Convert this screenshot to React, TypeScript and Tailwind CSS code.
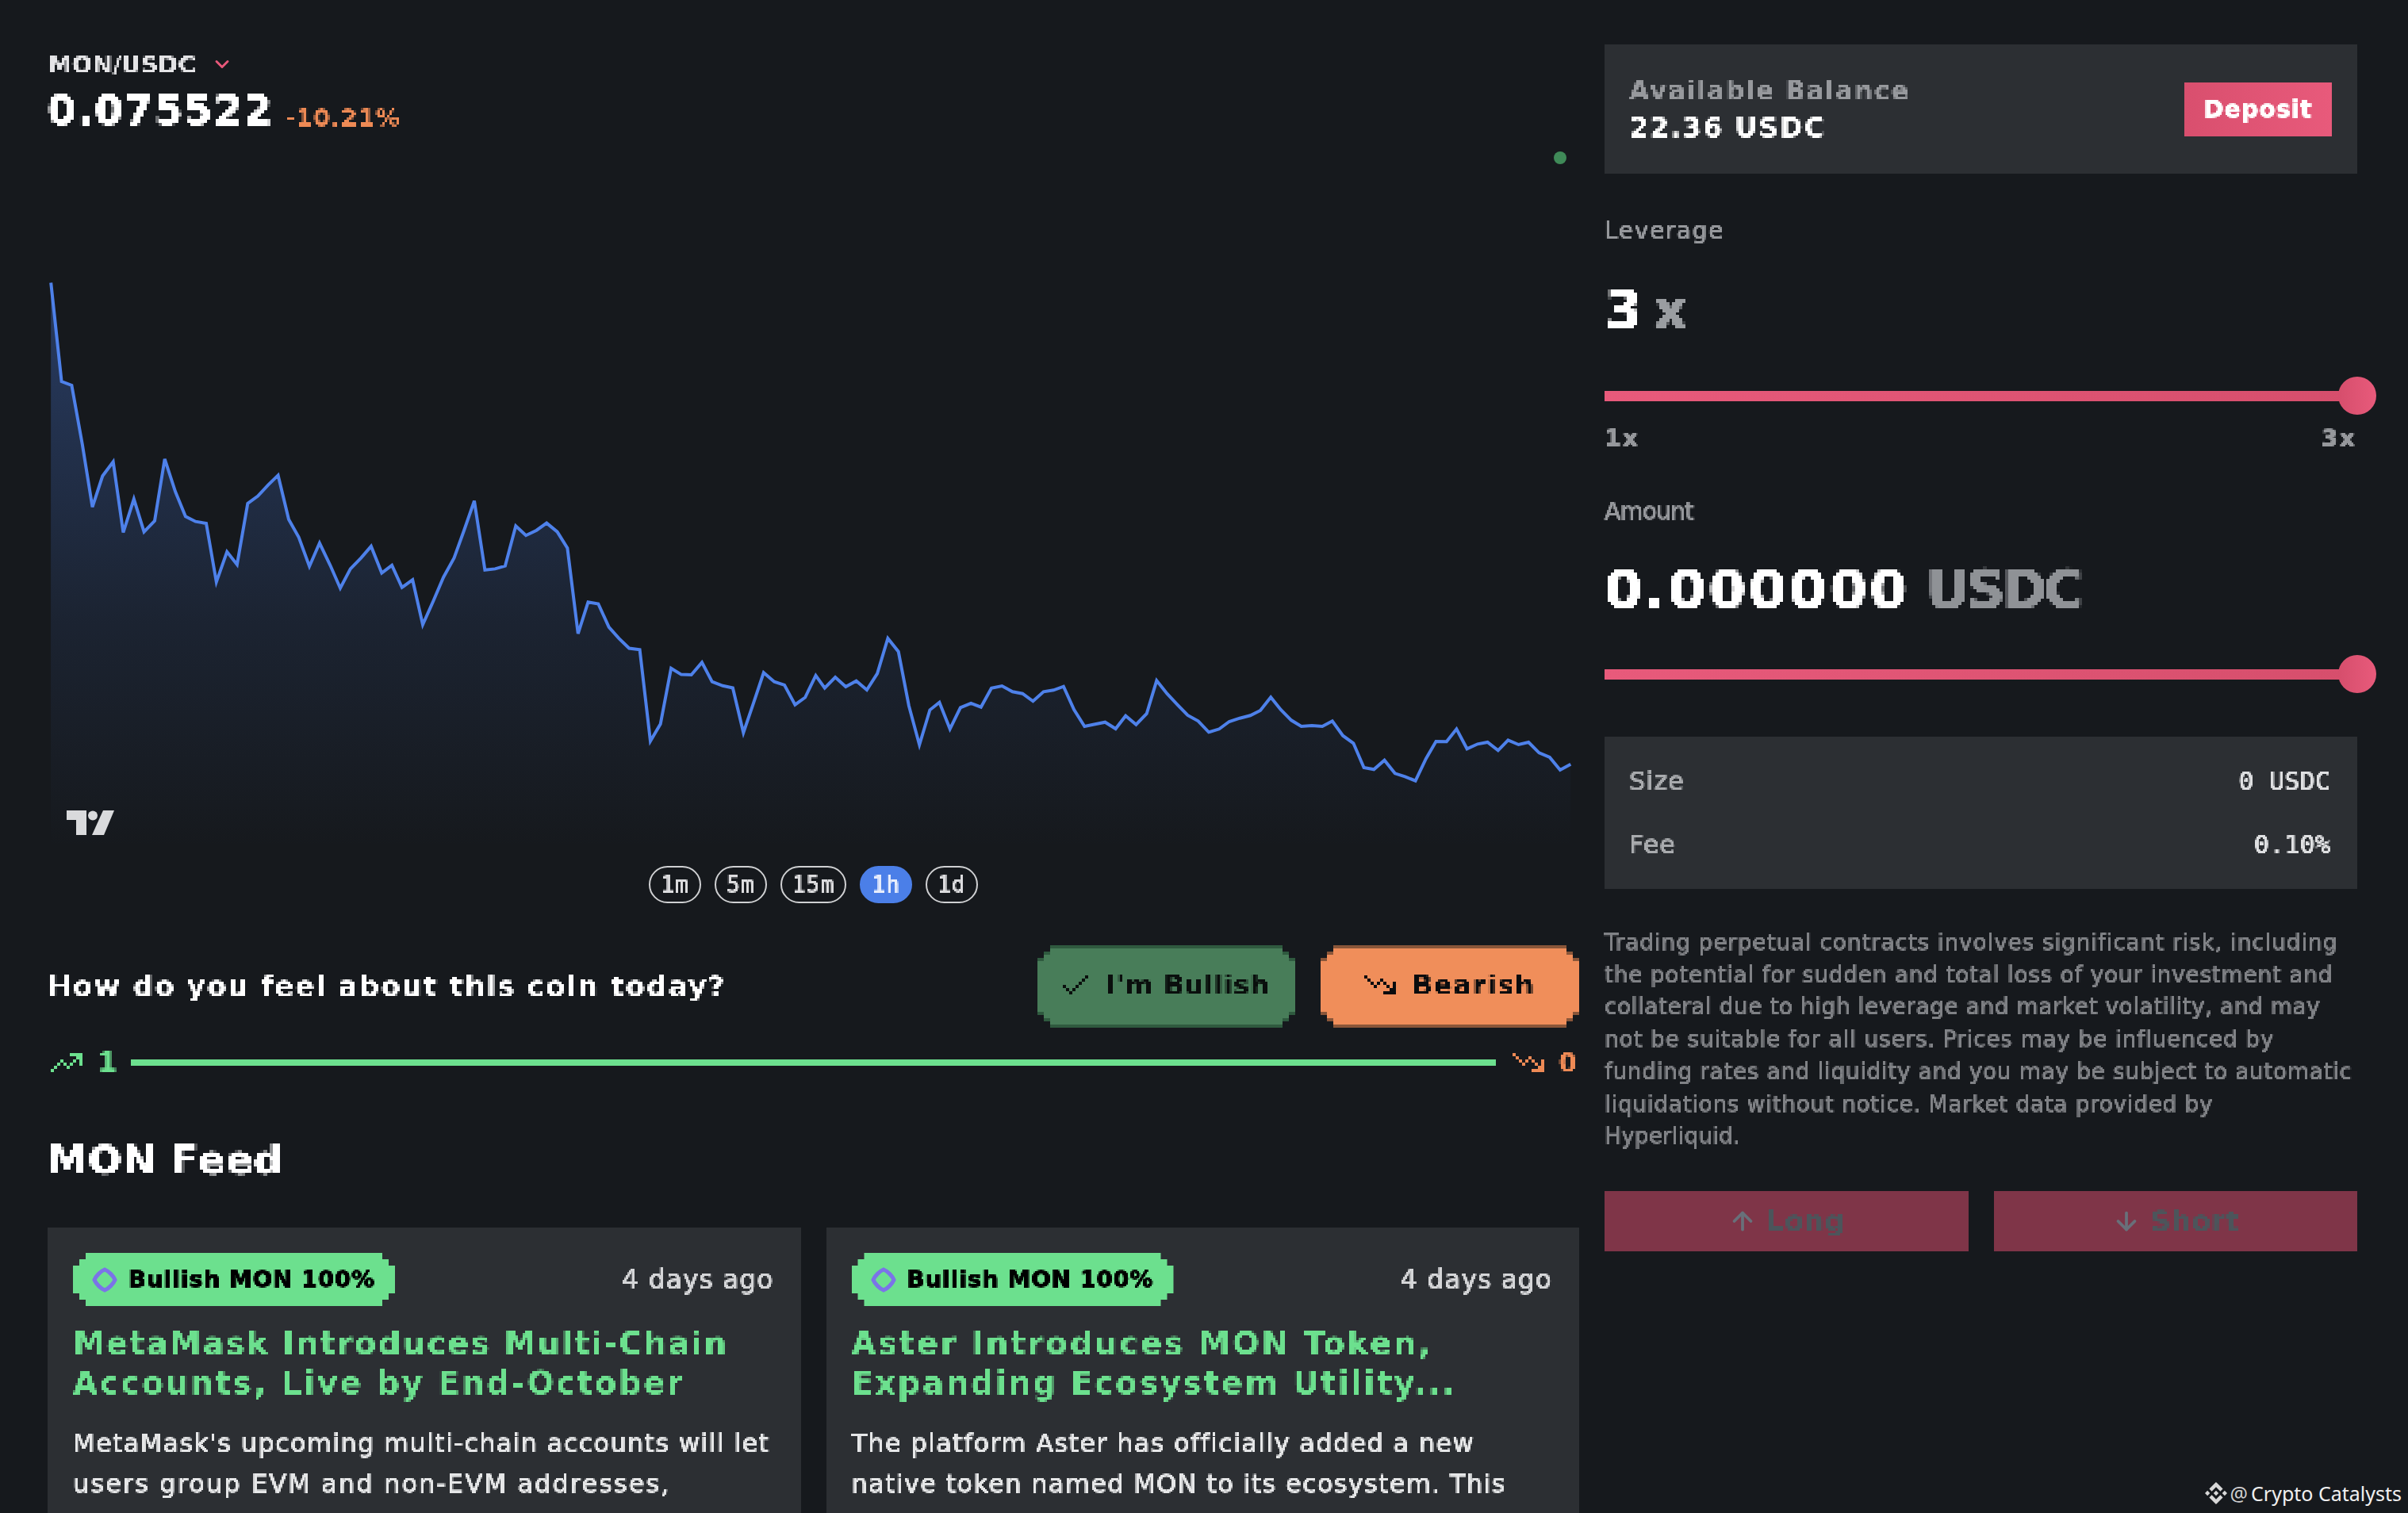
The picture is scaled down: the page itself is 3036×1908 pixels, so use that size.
import { ArrowDown, ArrowUp, ChevronDown } from "lucide-react";
import { SiBinance } from "react-icons/si";

const mono = "font-['DejaVu_Sans_Mono',monospace]";
const sans = "font-['DejaVu_Sans',sans-serif]";
const px2 = "[filter:url(#px2)]";
const px3 = "[filter:url(#px3)]";
const px4 = "[filter:url(#px4)]";
const stepped =
  "[clip-path:polygon(16px_0,calc(100%_-_16px)_0,calc(100%_-_16px)_8px,calc(100%_-_8px)_8px,calc(100%_-_8px)_16px,100%_16px,100%_calc(100%_-_16px),calc(100%_-_8px)_calc(100%_-_16px),calc(100%_-_8px)_calc(100%_-_8px),calc(100%_-_16px)_calc(100%_-_8px),calc(100%_-_16px)_100%,16px_100%,16px_calc(100%_-_8px),8px_calc(100%_-_8px),8px_calc(100%_-_16px),0_calc(100%_-_16px),0_16px,8px_16px,8px_8px,16px_8px)]";

// chart points read off the reference
const left = [38,36,59,307,79,318,100,480,120,652,140,567,161,528,181,722,202,630,222,720,243,690,263,520,284,610,304,678,324,692,345,697,365,858,386,775,406,810,427,642,447,622,467,592,487,565,508,686,528,735,549,815,569,751,590,812,610,875,630,822,651,792,671,760,692,833,712,812,732,873,753,852,773,975,794,910,814,845,835,792,855,715,875,635,896,825,916,822,936,814,957,704,977,730,998,716,1018,696,1039,720,1059,765,1080,1000,1100,913,1120,918,1141,982,1161,1013,1181,1040,1202,1044,1223,1295,1243,1248,1264,1095,1284,1112,1304,1113,1325,1079,1345,1132,1366,1143,1386,1149,1407,1272,1427,1190,1447,1107,1468,1132,1488,1141,1509,1195,1529,1175,1550,1115];
const right = [140,503,160,462,180,498,200,476,220,510,240,448,260,315,280,365,300,570,320,718,340,586,358,557,378,658,398,577,418,561,437,575,457,503,477,495,497,517,516,524,536,553,556,517,575,511,594,497,614,585,634,648,654,640,673,632,693,657,712,608,732,641,752,600,771,475,791,525,810,565,830,606,850,628,870,670,890,658,909,630,929,617,949,607,968,588,988,538,1007,585,1027,625,1046,648,1066,645,1086,648,1105,628,1125,683,1145,712,1165,804,1184,811,1204,776,1224,826,1243,838,1263,854,1283,770,1302,705,1322,706,1341,658,1361,733,1381,715,1400,708,1420,739,1439,700,1459,717,1478,708,1498,748,1518,765,1538,813,1558,791];

const points: number[][] = [];
for (let i = 0; i < left.length; i += 2) points.push([40 + left[i] / 1.568, 340 + left[i + 1] / 2.178]);
for (let i = 0; i < right.length; i += 2) points.push([1000 + (right[i] - 80) / 1.5077, 700 + right[i + 1] / 3]);

const line = points.map(([x, y]) => `${(x - 60).toFixed(1)},${(y - 340).toFixed(1)}`).join(" ");
const area = `4,730 ${line} 1920,730`;

const disclaimer = [
  ["Trading perpetual contracts involves significant risk, including", "tracking-[0.87px]"],
  ["the potential for sudden and total loss of your investment and", "tracking-[0.74px]"],
  ["collateral due to high leverage and market volatility, and may", "tracking-[0.53px]"],
  ["not be suitable for all users. Prices may be influenced by", "tracking-[0.83px]"],
  ["funding rates and liquidity and you may be subject to automatic", "tracking-[0.63px]"],
  ["liquidations without notice. Market data provided by", "tracking-[0.67px]"],
  ["Hyperliquid.", "tracking-[0.1px]"],
];

// pixel icons, [col, row] on a 4px grid
const checkCells = [[0,3],[1,4],[2,5],[3,4],[4,3],[5,2],[6,1],[7,0]];
const downCells = [[0,0],[1,1],[2,2],[3,3],[4,2],[5,1],[6,2],[7,3],[8,4],[9,2],[9,3],[9,4],[9,5],[8,5],[7,5],[6,5]];
const upCells = [[0,5],[1,4],[2,3],[3,2],[4,3],[5,4],[6,3],[7,2],[8,1],[9,0],[8,0],[7,0],[6,0],[9,1],[9,2],[9,3]];

const PixelIcon = ({ cells, w, className }: { cells: number[][]; w: number; className?: string }) => (
  <svg width={w * 4} height={24} viewBox={`0 0 ${w} 6`} className={className} fill="currentColor" shapeRendering="crispEdges">
    {cells.map(([x, y]) => <rect key={`${x}-${y}`} x={x} y={y} width="1" height="1" />)}
  </svg>
);

const FeedCard = ({ title, body }: { title: string[][]; body: string[][] }) => (
  <div className="bg-[#2c2f33] h-[400px] px-8 pt-8">
    <div className="flex items-center justify-between">
      <div className={`flex items-center gap-[14px] h-[67px] w-[406px] pl-6 bg-[#6ce08e] text-black ${stepped}`}>
        <svg viewBox="0 0 32 32" className="w-8 h-8" fill="none" stroke="#7b73e8" strokeWidth="5">
          <path d="M16 3 C21 5 27 11 29 16 C27 21 21 27 16 29 C11 27 5 21 3 16 C5 11 11 5 16 3Z" />
        </svg>
        <span className={`text-[29px] font-bold whitespace-nowrap tracking-[0.8px] ${sans} ${px2}`}>Bullish MON 100%</span>
      </div>
      <span className={`text-[33px] text-[#d5d6d8] pr-[2px] whitespace-nowrap tracking-[1px] ${sans} ${px2}`}>4 days ago</span>
    </div>
    <h3 className={`mt-[22px] text-[#6ce08e] text-[40px] leading-[50px] font-bold ${sans} ${px3}`}>
      {title.map(([t, c]) => <div key={t} className={`whitespace-nowrap ${c}`}>{t}</div>)}
    </h3>
    <p className={`mt-[26px] text-[#e6e7e8] text-[32px] leading-[51px] ${sans} ${px2}`}>
      {body.map(([t, c]) => <span key={t} className={`block whitespace-nowrap ${c}`}>{t}</span>)}
    </p>
  </div>
);

const Pill = ({ label, active }: { label: string; active?: boolean }) => (
  <button className={`h-[47px] rounded-[24px] px-[13px] border-2 text-[28px] leading-none tracking-[1px] ${active ? "bg-[#4b7fe8] border-[#4b7fe8] text-[#e8eefc]" : "border-[#cfd0d2] text-[#dcdcde]"} ${mono}`}>
    <span className={`inline-block ${px2}`}>{label}</span>
  </button>
);

export default function App() {
  return (
    <div className="relative w-[3036px] h-[1908px] overflow-hidden bg-[#16191d] text-white flex pl-[60px]">
      <svg className="absolute w-0 h-0">
        <filter id="px2" colorInterpolationFilters="sRGB">
          <feFlood x="0" y="0" width="1" height="1" />
          <feComposite width="2" height="2" />
          <feTile result="a" />
          <feComposite in="SourceGraphic" in2="a" operator="in" />
          <feMorphology operator="dilate" radius="1" />
        </filter>
        <filter id="px3" colorInterpolationFilters="sRGB">
          <feFlood x="1" y="1" width="1" height="1" />
          <feComposite width="3" height="3" />
          <feTile result="a" />
          <feComposite in="SourceGraphic" in2="a" operator="in" />
          <feMorphology operator="dilate" radius="1" />
        </filter>
        <filter id="px4" colorInterpolationFilters="sRGB">
          <feFlood x="2" y="2" width="1" height="1" />
          <feComposite width="4" height="4" />
          <feTile result="a" />
          <feComposite in="SourceGraphic" in2="a" operator="in" />
          <feMorphology operator="dilate" radius="2" />
        </filter>
      </svg>

      <div className="w-[1931px] shrink-0 pt-[60px]">
        <div className="flex items-center gap-5 h-[42px]">
          <span className={`text-[31px] font-bold text-[#e4e4e6] tracking-[-0.5px] ${sans} ${px3}`}>MON/USDC</span>
          <ChevronDown className="w-7 h-7 text-[#e8587a]" strokeWidth={2.5} />
        </div>
        <div className="flex items-end gap-[14px] mt-3 h-[52px]">
          <span className={`text-[51px] leading-[52px] font-bold tracking-[2.2px] ${sans} ${px4}`}>0.075522</span>
          <span className={`text-[31px] leading-[36px] font-bold text-[#ee8a55] tracking-[0.5px] ${sans} ${px3}`}>-10.21%</span>
        </div>

        <div className="relative mt-[174px] h-[730px]">
          <svg width="1931" height="730" className="block" viewBox="0 0 1931 730">
            <defs>
              <linearGradient id="fill" x1="0" y1="0" x2="0" y2="1">
                <stop offset="0" stopColor="#4b7fe8" stopOpacity="0.34" />
                <stop offset="0.6" stopColor="#4b7fe8" stopOpacity="0.1" />
                <stop offset="1" stopColor="#4b7fe8" stopOpacity="0" />
              </linearGradient>
            </defs>
            <polygon points={area} fill="url(#fill)" />
            <polyline points={line} fill="none" stroke="#4e81ea" strokeWidth="4" strokeLinejoin="miter" />
          </svg>
          <svg viewBox="0 0 60 31" className="absolute left-[24px] top-[682px] w-[60px] h-[31px]" fill="#d9dadc">
            <path d="M0 0h25v31H12V12H0z" />
            <circle cx="33" cy="6.5" r="6" />
            <path d="M46 0h14L47 31H32z" />
          </svg>
        </div>

        <div className="flex justify-center gap-[17px] mt-[22px]">
          <Pill label="1m" />
          <Pill label="5m" />
          <Pill label="15m" />
          <Pill label="1h" active />
          <Pill label="1d" />
        </div>

        <div className="flex items-center justify-between mt-[53px]">
          <span className={`text-[36px] font-bold tracking-[1.7px] whitespace-nowrap ${sans} ${px3}`}>How do you feel about this coin today?</span>
          <div className="flex gap-8">
            <button className={`w-[325px] h-[104px] bg-[#2f5a3f] ${stepped}`}>
              <div className={`h-[96px] pb-1 bg-[#487d59] text-[#0a0f0d] flex items-center justify-center gap-[22px] ${stepped}`}>
                <PixelIcon cells={checkCells} w={8} />
                <span className={`text-[34px] font-bold tracking-[0.6px] whitespace-nowrap ${sans} ${px3}`}>I'm Bullish</span>
              </div>
            </button>
            <button className={`w-[326px] h-[104px] bg-[#8a5639] ${stepped}`}>
              <div className={`h-[96px] pb-1 bg-[#f08e5a] text-[#0a0c0e] flex items-center justify-center gap-5 ${stepped}`}>
                <PixelIcon cells={downCells} w={10} />
                <span className={`text-[34px] font-bold tracking-[1.5px] whitespace-nowrap ${sans} ${px3}`}>Bearish</span>
              </div>
            </button>
          </div>
        </div>

        <div className="flex items-center h-6 mt-8">
          <PixelIcon cells={upCells} w={10} className="ml-[4px] text-[#6ce08e] shrink-0" />
          <span className={`w-[23px] ml-[19px] text-[#6ce08e] text-[36px] font-bold leading-none ${sans} ${px3}`}>1</span>
          <div className="ml-[19px] w-[1721px] h-2 bg-[#6ce08e]" />
          <PixelIcon cells={downCells} w={10} className="ml-[21px] text-[#ee8a55] shrink-0" />
          <span className={`ml-[18px] text-[#ee8a55] text-[33px] font-bold leading-none ${sans} ${px3}`}>0</span>
        </div>

        <h2 className={`mt-[78px] h-[66px] text-[50px] leading-[66px] font-bold tracking-[1.2px] ${sans} ${px4}`}>MON Feed</h2>

        <div className="grid grid-cols-2 gap-8 mt-[52px]">
          <FeedCard
            title={[["MetaMask Introduces Multi-Chain", "tracking-[2.2px]"], ["Accounts, Live by End-October", "tracking-[2.8px]"]]}
            body={[["MetaMask's upcoming multi-chain accounts will let", "tracking-[1.3px]"], ["users group EVM and non-EVM addresses,", "tracking-[2.1px]"]]}
          />
          <FeedCard
            title={[["Aster Introduces MON Token,", "tracking-[2.8px]"], ["Expanding Ecosystem Utility...", "tracking-[2.6px]"]]}
            body={[["The platform Aster has officially added a new", "tracking-[1.3px]"], ["native token named MON to its ecosystem. This", "tracking-[1.3px]"]]}
          />
        </div>
      </div>

      <div className="w-[949px] shrink-0 ml-8 pt-[56px]">
        <div className="h-[163px] bg-[#2c2f33] flex items-center justify-between pl-[31px] pr-8">
          <div>
            <div className={`text-[#97999d] text-[33px] leading-[46px] font-bold whitespace-nowrap tracking-[1.5px] ${sans} ${px3}`}>Available Balance</div>
            <div className={`text-[35px] leading-[46px] font-bold whitespace-nowrap tracking-[1.7px] ${sans} ${px3}`}>22.36 USDC</div>
          </div>
          <button className={`w-[186px] h-[68px] bg-gradient-to-r from-[#d94f6e] to-[#e85a7b] text-[30px] font-bold tracking-[1px] ${sans}`}>
            <span className={`inline-block ${px2}`}>Deposit</span>
          </button>
        </div>

        <div className={`mt-[56px] h-[32px] text-[30px] leading-[32px] tracking-[1.5px] text-[#96989c] ${sans} ${px2}`}>Leverage</div>
        <div className="mt-[54px] h-[60px] flex items-end gap-[14px]">
          <span className={`text-[68px] leading-[60px] font-bold ${sans} ${px4}`}>3</span>
          <span className={`text-[68px] leading-[60px] font-bold text-[#9a9da1] ${sans} ${px4}`}>x</span>
        </div>

        <div className="relative mt-[72px] h-[13px] bg-gradient-to-r from-[#e85a7b] to-[#d64e6c]">
          <div className="absolute right-[-24px] top-[-18px] w-12 h-12 rounded-full bg-gradient-to-r from-[#d64e6c] to-[#e85a7b]" />
        </div>
        <div className={`flex justify-between mt-[35px] h-[24px] text-[#96989c] text-[30px] font-bold leading-[24px] tracking-[2px] pr-[1px] ${sans}`}>
          <span className={px2}>1x</span>
          <span className={px2}>3x</span>
        </div>

        <div className={`mt-[67px] h-[26px] text-[30px] leading-[26px] tracking-[-1px] text-[#96989c] ${sans} ${px2}`}>Amount</div>
        <div className="mt-[60px] h-[52px] flex items-center gap-5">
          <span className={`text-[68px] leading-[52px] font-bold tracking-[3.5px] ${sans} ${px4}`}>0.000000</span>
          <span className={`text-[68px] leading-[52px] font-bold text-[#8f9296] tracking-[-4px] ${sans} ${px4}`}>USDC</span>
        </div>

        <div className="relative mt-[74px] h-[13px] bg-gradient-to-r from-[#e85a7b] to-[#d64e6c]">
          <div className="absolute right-[-24px] top-[-18px] w-12 h-12 rounded-full bg-gradient-to-r from-[#d64e6c] to-[#e85a7b]" />
        </div>

        <div className={`mt-[72px] h-[192px] bg-[#2c2f33] flex flex-col justify-center gap-[45px] pl-[31px] pr-[34px] text-[32px] leading-[35px] ${sans}`}>
          <div className="flex justify-between text-[#a9abae]">
            <span className={`tracking-[1px] ${px2}`}>Size</span>
            <span className={`text-[#dfe0e2] ${mono} ${px2}`}>0 USDC</span>
          </div>
          <div className="flex justify-between text-[#a9abae]">
            <span className={`tracking-[1px] ${px2}`}>Fee</span>
            <span className={`text-[#dfe0e2] ${mono} ${px2}`}>0.10%</span>
          </div>
        </div>

        <div className={`mt-[48px] text-[#808286] text-[28px] leading-[40.7px] ${sans} ${px2}`}>
          {disclaimer.map(([t, c]) => <span key={t} className={`block whitespace-nowrap ${c}`}>{t}</span>)}
        </div>

        <div className="grid grid-cols-2 gap-8 mt-[48px]">
          <button className={`h-[76px] bg-[#7f3548] text-[#4c555b] flex items-center justify-center gap-3 text-[36px] font-bold ${sans}`}>
            <ArrowUp className="w-9 h-9 text-[#68707a]" strokeWidth={2.5} />
            <span className={px3}>Long</span>
          </button>
          <button className={`h-[76px] bg-[#7f3548] text-[#4c555b] flex items-center justify-center gap-3 text-[36px] font-bold ${sans}`}>
            <ArrowDown className="w-9 h-9 text-[#68707a]" strokeWidth={2.5} />
            <span className={px3}>Short</span>
          </button>
        </div>
      </div>

      <div className="absolute left-[1959px] top-[191px] w-4 h-4 rounded-full bg-[#3f8a58]" />

      <div className="absolute right-[8px] bottom-[10px] flex items-center gap-1 text-[25px] leading-[30px] text-[#f0f0f0] font-['Noto_Sans',sans-serif]">
        <SiBinance className="w-7 h-7 text-[#d8d8d8]" />
        <span className="text-[#cfcfcf]">@</span>
        <span>Crypto Catalysts</span>
      </div>
    </div>
  );
}
